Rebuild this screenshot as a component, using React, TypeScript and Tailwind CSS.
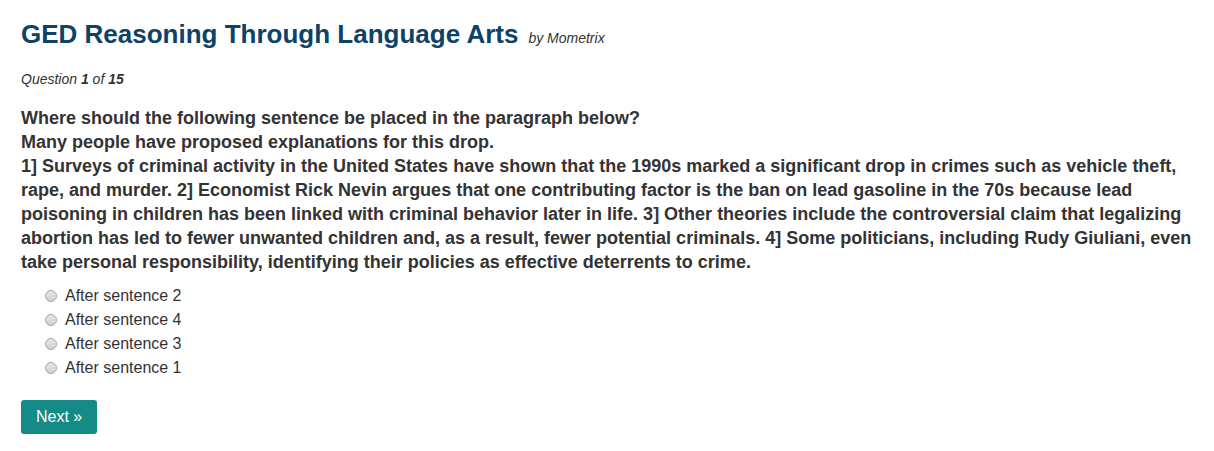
import React from "react";

const options = ["After sentence 2", "After sentence 4", "After sentence 3", "After sentence 1"];

export default function App() {
  return (
    <div className="bg-white text-[#333] pl-[21px] pr-[21px] pt-[18px] pb-4" style={{ fontFamily: '"Liberation Sans", Arial, sans-serif' }}>
      <div className="flex items-baseline gap-[10px]">
        <h1 className="text-[26px] leading-[32px] font-bold text-[#0e4266]">GED Reasoning Through Language Arts</h1>
        <span className="text-[14px] italic text-[#333]">by Mometrix</span>
      </div>
      <p className="mt-[20px] text-[14px] leading-[18px] italic">
        Question <b>1</b> of <b>15</b>
      </p>
      <div className="mt-[18px] text-[18px] leading-[24px] font-bold">
        <div>Where should the following sentence be placed in the paragraph below?</div>
        <div>Many people have proposed explanations for this drop.</div>
        <div>
          1] Surveys of criminal activity in the United States have shown that the 1990s marked a significant drop in crimes such as vehicle theft, rape, and murder. 2] Economist Rick Nevin argues that one contributing factor is the ban on lead gasoline in the 70s because lead poisoning in children has been linked with criminal behavior later in life. 3] Other theories include the controversial claim that legalizing abortion has led to fewer unwanted children and, as a result, fewer potential criminals. 4] Some politicians, including Rudy Giuliani, even take personal responsibility, identifying their policies as effective deterrents to crime.
        </div>
      </div>
      <div className="mt-[10px] pl-[24px] flex flex-col">
        {options.map((o) => (
          <label key={o} className="flex items-center h-[24px] text-[16px]">
            <span className="w-[12px] h-[12px] rounded-full border border-[#a8a8a8] bg-gradient-to-b from-[#e6e6e6] to-[#d0d0d0] mr-[8px]" />
            <span>{o}</span>
          </label>
        ))}
      </div>
      <button className="mt-[20px] h-[34px] px-[15px] rounded-[3px] bg-[#148b87] text-white text-[16px] leading-[34px]">
        Next »
      </button>
    </div>
  );
}
